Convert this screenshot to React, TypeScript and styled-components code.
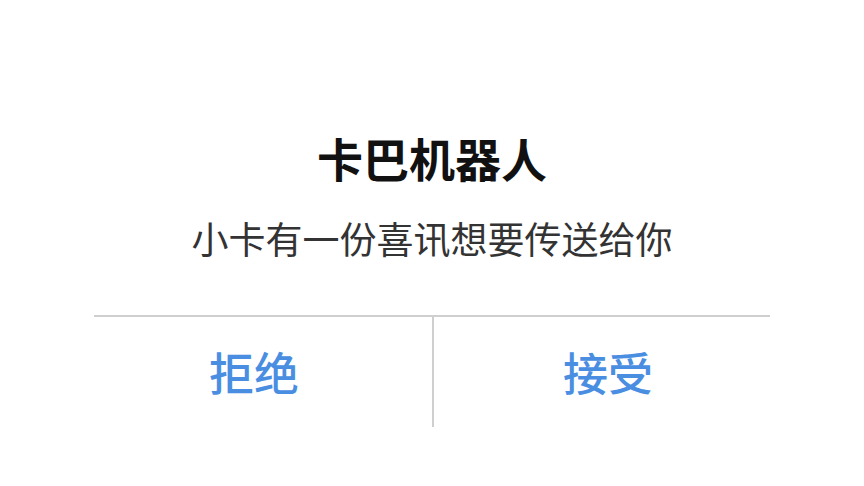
import React from 'react';
import styled, { createGlobalStyle } from 'styled-components';

const GlobalStyle = createGlobalStyle`
  html, body {
    margin: 0;
    padding: 0;
    background: #ffffff;
  }
  body {
    font-family: "Noto Sans CJK SC", "Noto Sans", sans-serif;
  }
`;

const Page = styled.div`
  width: 864px;
  height: 486px;
  display: flex;
  justify-content: center;
  padding-top: 134px;
  box-sizing: border-box;
`;

const Dialog = styled.div`
  width: 676px;
  display: flex;
  flex-direction: column;
  align-items: center;
`;

const Title = styled.h1`
  margin: 0;
  font-size: 46px;
  line-height: 46px;
  font-weight: 700;
  color: #111111;
`;

const Message = styled.p`
  margin: 39px 0 0;
  font-size: 37px;
  line-height: 38px;
  font-weight: 400;
  color: #333333;
`;

const Actions = styled.div`
  margin-top: 58px;
  width: 100%;
  display: flex;
  border-top: 2px solid #cfcfcf;
`;

const ActionButton = styled.button<{ $divider?: boolean; $shift: number }>`
  flex: 0 0 50%;
  box-sizing: border-box;
  height: 110px;
  padding: 0 ${(p) => (p.$shift < 0 ? -p.$shift * 2 : 0)}px 0
    ${(p) => (p.$shift > 0 ? p.$shift * 2 : 0)}px;
  border: none;
  background: transparent;
  border-left: ${(p) => (p.$divider ? '2px solid #cfcfcf' : 'none')};
  font-family: "Noto Sans CJK SC", "Noto Sans", sans-serif;
  font-size: 45px;
  line-height: 46px;
  font-weight: 500;
  color: #4a8ee2;
  display: flex;
  align-items: center;
  justify-content: center;
  cursor: pointer;
`;

const App: React.FC = () => {
  return (
    <>
      <GlobalStyle />
      <Page>
        <Dialog>
          <Title>卡巴机器人</Title>
          <Message>小卡有一份喜讯想要传送给你</Message>
          <Actions>
            <ActionButton $shift={-9}>拒绝</ActionButton>
            <ActionButton $divider $shift={6}>接受</ActionButton>
          </Actions>
        </Dialog>
      </Page>
    </>
  );
};

export default App;
